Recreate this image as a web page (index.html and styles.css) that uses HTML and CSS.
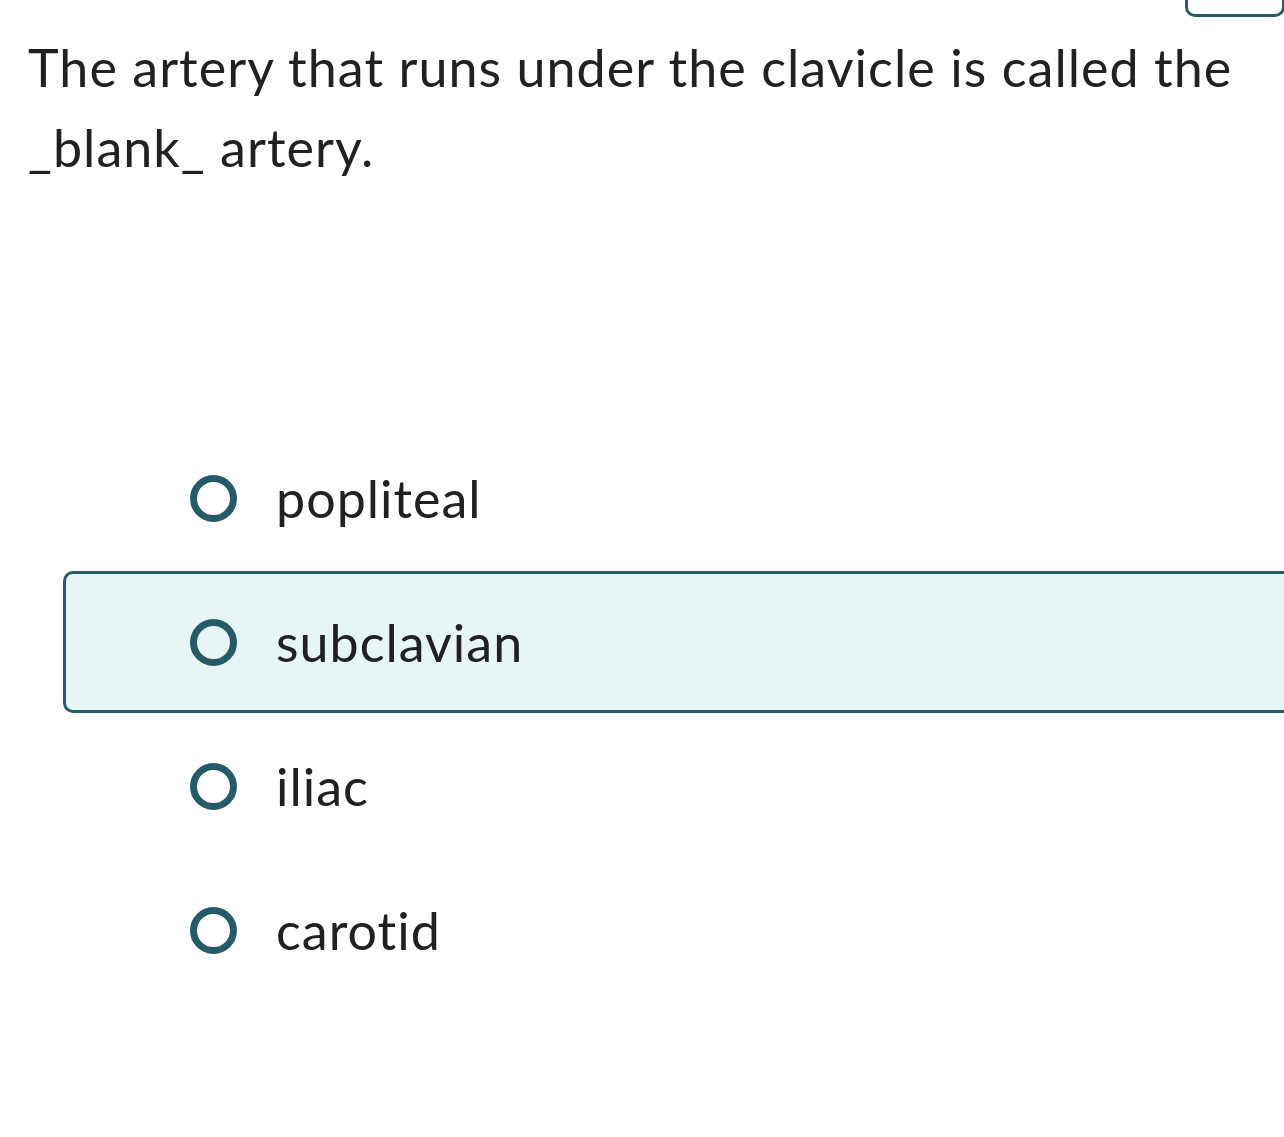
FILE: index.html
```html
<!DOCTYPE html>
<html>
<head>
<meta charset="utf-8">
<link rel="stylesheet" href="styles.css">
</head>
<body>
<div class="topbar"><div class="topbtn"></div></div>
<div class="question">The artery that runs under the clavicle is called the _blank_ artery.</div>
<div class="options">
  <div class="option"><span class="radio"></span><span class="label">popliteal</span></div>
  <div class="option selected"><span class="radio"></span><span class="label">subclavian</span></div>
  <div class="option"><span class="radio"></span><span class="label">iliac</span></div>
  <div class="option"><span class="radio"></span><span class="label">carotid</span></div>
</div>
</body>
</html>
```
FILE: styles.css
```css
html, body {
  margin: 0;
  padding: 0;
  background: #ffffff;
  overflow: hidden;
}
body {
  width: 1284px;
  height: 1137px;
  font-family: Lato, "Noto Sans", sans-serif;
  font-variant-ligatures: none;
  color: #212121;
}
.topbar {
  height: 17px;
  display: flex;
  justify-content: flex-end;
  overflow: hidden;
}
.topbtn {
  width: 94px;
  height: 34px;
  margin-top: -23px;
  margin-right: -1px;
  border: 3px solid #2a5b6b;
  border-radius: 10px;
  flex: none;
}
.question {
  padding: 0 30px 0 28px;
  font-size: 52px;
  letter-spacing: 1.05px;
  line-height: 80px;
  margin-top: 10px;
}
.options {
  margin-top: 240px;
  margin-left: 63px;
  width: 1260px;
  display: flex;
  flex-direction: column;
  gap: 2px;
}
.option {
  box-sizing: border-box;
  height: 142px;
  border: 3px solid transparent;
  border-radius: 10px;
  display: flex;
  align-items: center;
  padding-left: 124px;
}
.option.selected {
  background: #e7f5f7;
  border-color: #2a5b6b;
}
.radio {
  width: 33px;
  height: 33px;
  border: 7px solid #255a69;
  border-radius: 50%;
  flex: none;
  background: transparent;
}
.label {
  margin-left: 39px;
  font-size: 52px;
  letter-spacing: 1px;
}
```
